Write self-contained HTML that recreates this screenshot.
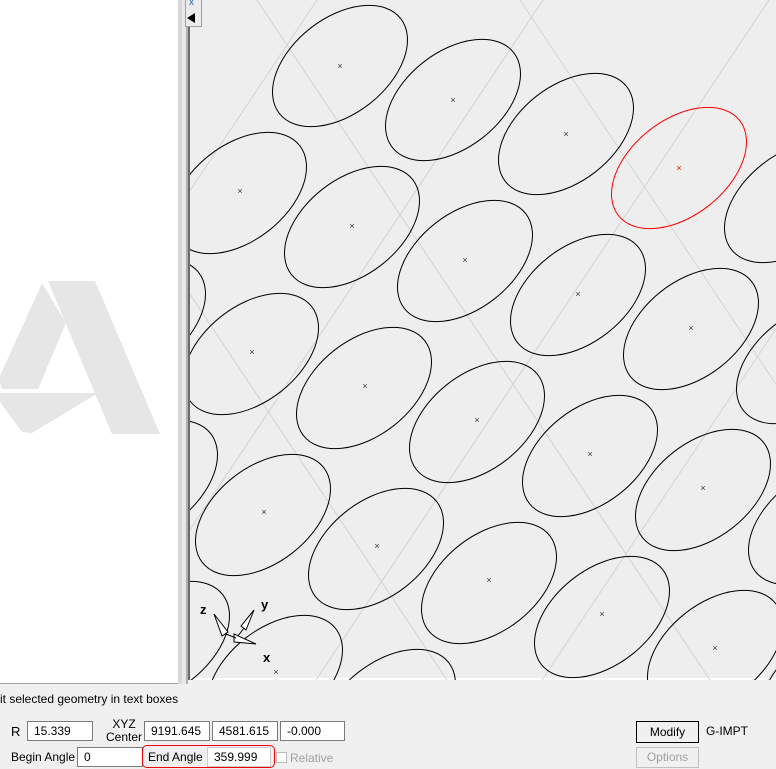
<!DOCTYPE html>
<html><head><meta charset="utf-8"><style>
*{margin:0;padding:0;box-sizing:border-box}
html,body{overflow:hidden}
body{width:776px;height:769px;background:#f0f0f0;font-family:"Liberation Sans",Arial,sans-serif;font-size:12px;color:#000;position:relative}
.a{position:absolute}
.inp{position:absolute;background:#fff;border:1px solid #7a7a7a;height:20px;padding-left:6px;line-height:18px;font-size:12px}
</style></head><body>
<div class="a" style="left:0;top:0;width:178px;height:684px;background:#fff;border-bottom:1px solid #a0a0a0"></div>
<svg class="a" style="left:0;top:0" width="178" height="684">
<polygon points="48,281 95,281 160,434 112,434" fill="#e6e6e6"/>
<polygon points="42,283 66,323 38,389 2,389 0,384 0,376" fill="#e6e6e6"/>
<polygon points="0,393 98,393 32,433 22,432 0,402" fill="#e6e6e6"/>
</svg>
<div class="a" style="left:178px;top:0;width:4px;height:684px;background:#d8d8d8"></div>
<div class="a" style="left:182px;top:0;width:4px;height:684px;background:#e8e8e8"></div>
<div class="a" style="left:186px;top:0;width:2px;height:684px;background:#b0b0b0"></div>
<div class="a" style="left:188px;top:0;width:2px;height:680px;background:#6a6a6a"></div>
<svg class="a" style="left:190px;top:0" width="586" height="680">
<rect width="586" height="678" fill="#eeeeee"/>
<rect y="678" width="586" height="2" fill="#fff"/>
<g stroke="#d4d4d4" stroke-width="1" fill="none">
<line x1="67" y1="0" x2="520" y2="680"/><line x1="330" y1="0" x2="783" y2="680"/><line x1="-196" y1="0" x2="257" y2="680"/><line x1="593" y1="0" x2="1046" y2="680"/>
<line x1="127" y1="0" x2="-326" y2="680"/><line x1="353" y1="0" x2="-100" y2="680"/><line x1="579" y1="0" x2="126" y2="680"/><line x1="805" y1="0" x2="352" y2="680"/><line x1="1031" y1="0" x2="578" y2="680"/>
</g>
<g transform="translate(-190,0)" fill="none" stroke="#000" stroke-width="1">
<ellipse cx="340" cy="66" rx="77" ry="48" transform="rotate(-38 340 66)"/>
<ellipse cx="453" cy="100" rx="77" ry="48" transform="rotate(-38 453 100)"/>
<ellipse cx="566" cy="134" rx="77" ry="48" transform="rotate(-38 566 134)"/>
<ellipse cx="679" cy="168" rx="77" ry="48" transform="rotate(-38 679 168)" stroke="#f00"/>
<ellipse cx="792" cy="202" rx="77" ry="48" transform="rotate(-38 792 202)"/>
<ellipse cx="239" cy="193" rx="77" ry="48" transform="rotate(-38 239 193)"/>
<ellipse cx="352" cy="227" rx="77" ry="48" transform="rotate(-38 352 227)"/>
<ellipse cx="465" cy="261" rx="77" ry="48" transform="rotate(-38 465 261)"/>
<ellipse cx="578" cy="295" rx="77" ry="48" transform="rotate(-38 578 295)"/>
<ellipse cx="691" cy="329" rx="77" ry="48" transform="rotate(-38 691 329)"/>
<ellipse cx="804" cy="363" rx="77" ry="48" transform="rotate(-38 804 363)"/>
<ellipse cx="138" cy="320" rx="77" ry="48" transform="rotate(-38 138 320)"/>
<ellipse cx="251" cy="354" rx="77" ry="48" transform="rotate(-38 251 354)"/>
<ellipse cx="364" cy="388" rx="77" ry="48" transform="rotate(-38 364 388)"/>
<ellipse cx="477" cy="422" rx="77" ry="48" transform="rotate(-38 477 422)"/>
<ellipse cx="590" cy="456" rx="77" ry="48" transform="rotate(-38 590 456)"/>
<ellipse cx="703" cy="490" rx="77" ry="48" transform="rotate(-38 703 490)"/>
<ellipse cx="816" cy="524" rx="77" ry="48" transform="rotate(-38 816 524)"/>
<ellipse cx="150" cy="481" rx="77" ry="48" transform="rotate(-38 150 481)"/>
<ellipse cx="263" cy="515" rx="77" ry="48" transform="rotate(-38 263 515)"/>
<ellipse cx="376" cy="549" rx="77" ry="48" transform="rotate(-38 376 549)"/>
<ellipse cx="489" cy="583" rx="77" ry="48" transform="rotate(-38 489 583)"/>
<ellipse cx="602" cy="617" rx="77" ry="48" transform="rotate(-38 602 617)"/>
<ellipse cx="715" cy="651" rx="77" ry="48" transform="rotate(-38 715 651)"/>
<ellipse cx="828" cy="685" rx="77" ry="48" transform="rotate(-38 828 685)"/>
<ellipse cx="162" cy="642" rx="77" ry="48" transform="rotate(-38 162 642)"/>
<ellipse cx="275" cy="676" rx="77" ry="48" transform="rotate(-38 275 676)"/>
<ellipse cx="388" cy="710" rx="77" ry="48" transform="rotate(-38 388 710)"/>
<ellipse cx="501" cy="744" rx="77" ry="48" transform="rotate(-38 501 744)"/>
<g font-size="9" fill="#333" stroke="none" font-family="Liberation Sans" text-anchor="middle">
<text x="340" y="69">×</text><text x="453" y="103">×</text><text x="566" y="137">×</text><text x="679" y="171" fill="#f00">×</text>
<text x="240" y="194">×</text><text x="352" y="229">×</text><text x="465" y="263">×</text><text x="578" y="297">×</text><text x="691" y="331">×</text>
<text x="252" y="355">×</text><text x="365" y="389">×</text><text x="477" y="423">×</text><text x="590" y="457">×</text><text x="703" y="491">×</text>
<text x="264" y="515">×</text><text x="377" y="549">×</text><text x="489" y="583">×</text><text x="602" y="617">×</text><text x="715" y="651">×</text>
<text x="276" y="675">×</text>
</g>
<g stroke="#000" fill="#fff" stroke-width="1">
<polygon points="214,614 228,632 222,636"/><polygon points="254,610 241,626 246,630"/><polygon points="234,634 256,644 234,642" />
<line x1="226" y1="634" x2="236" y2="638"/><line x1="244" y1="628" x2="238" y2="636"/>
</g>
<g font-family="Liberation Sans" font-weight="bold" font-size="13" fill="#000" stroke="none">
<text x="200" y="614">z</text><text x="261" y="609">y</text><text x="263" y="662">x</text>
</g>
</g>
</svg>
<div class="a" style="left:185px;top:0;width:17px;height:27px;background:#ececec;border:1px solid #a0a0a0;border-top:none"></div>
<div class="a" style="left:189px;top:-3px;font-size:10px;color:#3060c0">x</div>
<div class="a" style="left:187px;top:13px;width:0;height:0;border-top:5px solid transparent;border-bottom:5px solid transparent;border-right:8px solid #000"></div>

<div class="a" style="left:0;top:692px">it selected geometry in text boxes</div>
<div class="a" style="left:11px;top:724px;font-size:13px">R</div>
<div class="inp" style="left:27px;top:721px;width:66px">15.339</div>
<div class="a" style="left:104px;top:718px;width:40px;text-align:center;line-height:13px">XYZ<br>Center</div>
<div class="inp" style="left:144px;top:721px;width:66px">9191.645</div>
<div class="inp" style="left:212px;top:721px;width:66px">4581.615</div>
<div class="inp" style="left:280px;top:721px;width:65px">-0.000</div>
<div class="a" style="left:11px;top:750px">Begin Angle</div>
<div class="inp" style="left:77px;top:747px;width:66px">0</div>
<div class="a" style="left:142px;top:745px;width:133px;height:23px;border:1.5px solid #e00;border-radius:5px;background:#f0f0f0"></div>
<div class="a" style="left:148px;top:750px">End Angle</div>
<div class="inp" style="left:207px;top:747px;width:64px;border-color:#ccc">359.999</div>
<div class="a" style="left:276px;top:752px;width:11px;height:11px;border:1px solid #bbb;background:#fff"></div>
<div class="a" style="left:290px;top:751px;color:#a0a0a0">Relative</div>
<div class="a" style="left:636px;top:721px;width:63px;height:22px;border:1px solid #000;background:#f0f0f0;text-align:center;line-height:20px">Modify</div>
<div class="a" style="left:706px;top:724px">G-IMPT</div>
<div class="a" style="left:636px;top:747px;width:63px;height:21px;border:1px solid #c0c0c0;background:#f0f0f0;text-align:center;line-height:19px;color:#a0a0a0">Options</div>
</body></html>
